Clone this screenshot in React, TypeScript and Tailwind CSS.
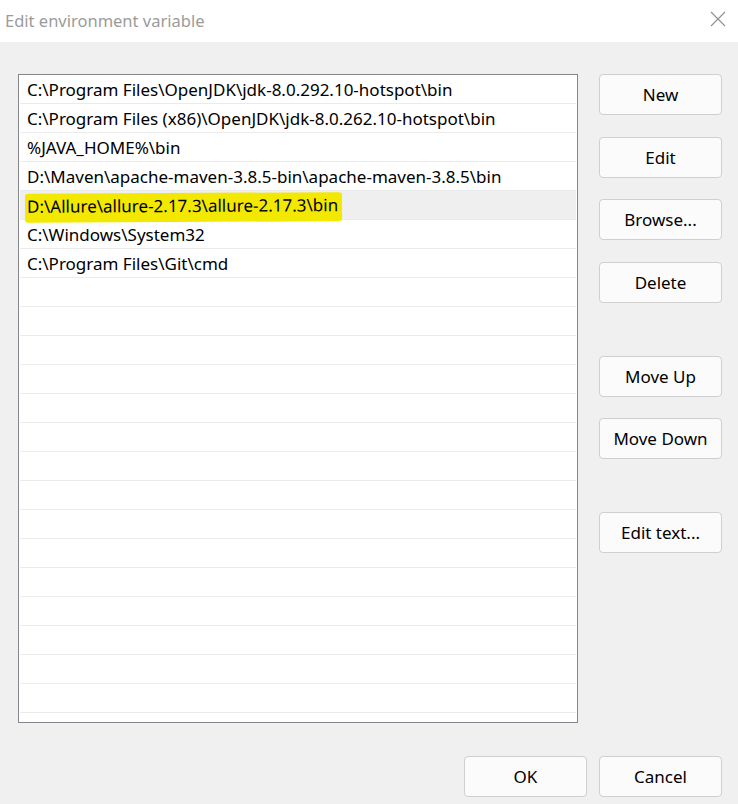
import React from 'react';

const paths = [
  'C:\\Program Files\\OpenJDK\\jdk-8.0.292.10-hotspot\\bin',
  'C:\\Program Files (x86)\\OpenJDK\\jdk-8.0.262.10-hotspot\\bin',
  '%JAVA_HOME%\\bin',
  'D:\\Maven\\apache-maven-3.8.5-bin\\apache-maven-3.8.5\\bin',
  'D:\\Allure\\allure-2.17.3\\allure-2.17.3\\bin',
  'C:\\Windows\\System32',
  'C:\\Program Files\\Git\\cmd',
];

const TOTAL_ROWS = 22;
const SELECTED = 4;

function DlgButton({ label, className = '' }: { label: string; className?: string }) {
  return (
    <button
      className={`w-[123px] h-[41px] shrink-0 bg-[#fbfbfb] border border-[#cfcfcf] rounded-[4px] text-[17px] text-black ${className}`}
    >
      {label}
    </button>
  );
}

export default function App() {
  const rows = Array.from({ length: TOTAL_ROWS }, (_, i) => paths[i] ?? '');

  return (
    <div
      className="w-[738px] h-[804px] bg-[#f0f0f0] flex flex-col overflow-hidden"
      style={{ fontFamily: '"Segoe UI", "Noto Sans", "Open Sans", sans-serif' }}
    >
      {/* Title bar */}
      <div className="h-[42px] bg-white flex items-center justify-between shrink-0">
        <span className="pl-[5px] text-[16.5px] text-[#9b9b9b]">Edit environment variable</span>
        <svg width="16" height="16" viewBox="0 0 16 16" className="mr-[12px] mb-[4px]">
          <path d="M1 1 L15 15 M15 1 L1 15" stroke="#8f8f8f" strokeWidth="1.1" fill="none" />
        </svg>
      </div>

      {/* Body */}
      <div className="flex pt-[32px] pl-[18px]">
        {/* List box */}
        <div className="w-[560px] h-[649px] bg-white border border-[#85858c] pl-[1px] pr-[1px] overflow-hidden">
          {rows.map((text, i) => (
            <div
              key={i}
              className={`h-[29px] border-b border-[#ebebeb] flex items-center pl-[7px] pt-[2px] text-[17px] text-black whitespace-nowrap ${
                i === SELECTED ? 'bg-[#efefef]' : ''
              }`}
            >
              {i === SELECTED ? (
                <span className="bg-[#f2e800] -ml-[2px] pl-[2px] pr-[4px] pt-[1px] pb-[4px] mt-[3px] rounded-[3px] -rotate-[0.3deg] leading-[24px]">
                  {text}
                </span>
              ) : (
                text
              )}
            </div>
          ))}
        </div>

        {/* Side buttons */}
        <div className="flex flex-col ml-[21px]">
          <DlgButton label="New" />
          <DlgButton label="Edit" className="mt-[22px]" />
          <DlgButton label="Browse..." className="mt-[21px]" />
          <DlgButton label="Delete" className="mt-[22px]" />
          <DlgButton label="Move Up" className="mt-[53px]" />
          <DlgButton label="Move Down" className="mt-[21px]" />
          <DlgButton label="Edit text..." className="mt-[53px]" />
        </div>
      </div>

      {/* Footer buttons */}
      <div className="flex justify-end gap-[12px] pr-[16px] mt-[33px]">
        <DlgButton label="OK" />
        <DlgButton label="Cancel" />
      </div>
    </div>
  );
}
